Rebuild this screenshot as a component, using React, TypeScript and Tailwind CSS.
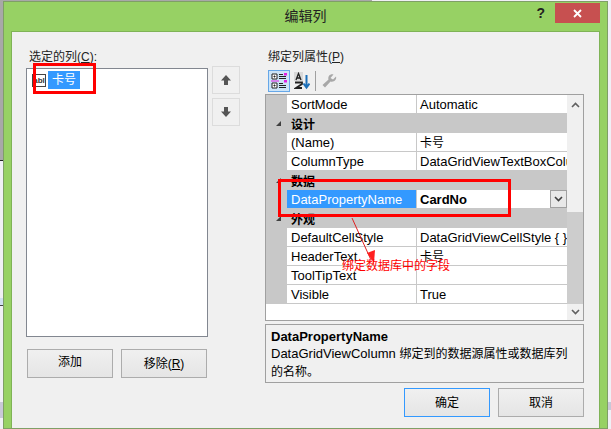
const SANS = "font-['Liberation_Sans','Noto_Sans_CJK_SC',sans-serif]";

const rows = [
  { name: "SortMode", value: "Automatic" },
  { cat: "设计" },
  { name: "(Name)", value: <span className="text-[12px]">卡号</span> },
  { name: "ColumnType", value: "DataGridViewTextBoxColu" },
  { cat: "数据" },
  { name: "DataPropertyName", value: "CardNo", selected: true },
  { cat: "外观" },
  { name: "DefaultCellStyle", value: "DataGridViewCellStyle { }" },
  { name: "HeaderText", value: <span className="text-[12px]">卡号</span> },
  { name: "ToolTipText", value: "" },
  { name: "Visible", value: "True" },
];

function Row({ row }: { row: any }) {
  if (row.cat) {
    return (
      <div className="flex h-[19px] items-center bg-[#c8c8c8] text-[12px]">
        <div className="flex w-[21px] justify-center pl-[3px]">
          <svg width="7" height="7" viewBox="0 0 7 7"><path d="M6 1V6H1Z" fill="#404040" /></svg>
        </div>
        <span className="pl-[4px] pt-[2px] font-bold text-black">{row.cat}</span>
      </div>
    );
  }
  return (
    <div className="flex h-[19px] border-b border-[#c8c8c8] bg-white">
      <div className="w-[21px] shrink-0 bg-[#c8c8c8]" />
      <div className={`flex w-[129px] shrink-0 items-center pl-[4px] pt-[2px] ${row.selected ? "bg-[#3399ff] text-white" : "text-black"}`}>
        {row.name}
      </div>
      <div className={`flex min-w-0 flex-1 items-center overflow-hidden whitespace-nowrap border-l border-[#c8c8c8] pl-[3px] pt-[2px] text-black ${row.selected ? "font-bold" : ""}`}>
        {row.value}
        {row.selected && (
          <div className="ml-auto -mt-[2px] flex h-[18px] w-[17px] items-center justify-center border border-[#a0a0a0] bg-[#e8e8e8]">
            <svg width="9" height="6" viewBox="0 0 9 6"><path d="M1 1L4.5 4.5L8 1" fill="none" stroke="#404040" strokeWidth="1.6" /></svg>
          </div>
        )}
      </div>
    </div>
  );
}

function ArrowBtn({ up }: { up?: boolean }) {
  return (
    <button className="flex h-[28px] w-[28px] items-center justify-center border border-[#dcdcdc]">
      <svg width="12" height="12" viewBox="0 0 12 12">
        <path d={up ? "M6 1L11 6.5H8V11H4V6.5H1Z" : "M6 11L11 5.5H8V1H4V5.5H1Z"} fill="#555" />
      </svg>
    </button>
  );
}

function DlgBtn({ children, primary, raised }: { children: React.ReactNode; primary?: boolean; raised?: boolean }) {
  return (
    <button className={`h-[29px] w-[86px] border bg-gradient-to-b from-[#f0f0f0] to-[#e5e5e5] text-[12px] text-black ${primary ? "border-[#3399ff]" : "border-[#acacac]"} ${raised ? "pb-[4px]" : ""}`}>
      {children}
    </button>
  );
}

export default function App() {
  return (
    <div className={`relative h-[429px] w-[611px] overflow-hidden bg-[#f0f0f5] pl-[3px] pt-px text-[13px] ${SANS}`}>
      {/* bits of the desktop showing behind the dialog */}
      <div className="absolute left-0 top-0 h-[1px] w-[372px] bg-[#a8a8a8]" />
      <div className="absolute left-0 top-0 h-[161px] w-[3px] border-b border-[#222] bg-[#a8a8a8]" />
      <div className="absolute left-0 top-[298px] h-[8px] w-[3px] border-b border-[#444] bg-[#d0e0f0]" />
      <div className="absolute left-0 top-[402px] h-[16px] w-[3px] bg-[#c8c8d8]" />
      <div className="absolute right-0 top-[402px] h-[8px] w-[3px] bg-[#c8c8d8]" />
      <div className="flex h-[428px] w-[605px] flex-col border border-[#7f9f66] bg-[#97d164]">
        {/* title bar */}
        <div className="relative flex h-[29px] shrink-0 items-center justify-center text-[14px] text-[#222]">
          编辑列
          <span className="absolute right-[62px] top-[1px] text-[14px] font-bold">?</span>
          <div className="absolute right-[7px] top-[1px] flex h-[20px] w-[45px] items-center justify-center bg-[#c75050]">
            <svg width="9" height="9" viewBox="0 0 9 9"><path d="M1 1L8 8M8 1L1 8" stroke="#fff" strokeWidth="1.8" /></svg>
          </div>
        </div>

        <div className="ml-[7px] mr-[7px] flex flex-1 gap-[4px] border-l border-r border-t border-[#7fb356] bg-[#f0f0f0] pl-[14px] pt-[16px]">
          {/* left column */}
          <div className="w-[182px] shrink-0">
            <div className="h-[20px] pl-[3px] text-[12px] leading-[18px] text-[#222]">选定的列(<u>C</u>):</div>
            <div className="flex h-[269px] items-start border border-[#828790] bg-white pl-[5px] pt-[2px]">
              <div className="mt-[3px] flex h-[13px] w-[14px] items-center justify-center border border-[#444] text-[8px] font-bold leading-none text-[#333]">
                abl
              </div>
              <div className="ml-[2px] flex h-[18px] w-[32px] items-center justify-center bg-[#3399ff] text-[12px] text-white">卡号</div>
            </div>
            <div className="mt-[12px] flex gap-[8px] pl-px">
              <DlgBtn raised>添加</DlgBtn>
              <DlgBtn>移除(<u>R</u>)</DlgBtn>
            </div>
          </div>

          {/* move buttons */}
          <div className="flex w-[49px] shrink-0 flex-col gap-[4px] pt-[18px]">
            <ArrowBtn up />
            <ArrowBtn />
          </div>

          {/* right column */}
          <div className="w-[319px] shrink-0">
            <div className="h-[20px] pl-[3px] text-[12px] leading-[18px] text-[#222]">绑定列属性(<u>P</u>)</div>
            <div className="flex h-[26px] items-center gap-[4px] pl-[3px]">
              <div className="flex h-[22px] w-[22px] items-center justify-center border border-[#66a7e8] bg-[#cce4f7]">
                <svg width="16" height="16" viewBox="0 0 16 16">
                  <path d="M1 1H6V6H1ZM1 10H6V15H1Z" fill="#fff" stroke="#222" />
                  <path d="M2.5 3.5H4.5M2.5 12.5H4.5M3.5 2.5V4.5M3.5 11.5V13.5" stroke="#222" />
                  <path d="M8 1.5H12M8 3.5H15M8 5.5H15M8 10.5H12M8 12.5H15M8 14.5H15" stroke="#222" />
                  <path d="M0 8H8" stroke="#e020e0" />
                  <path d="M13 0H16V2.5H13ZM13 7H16V9.5H13Z" fill="#e020e0" />
                </svg>
              </div>
              <svg width="16" height="18" viewBox="0 0 16 18">
                <path d="M0 0H9V9H0Z" fill="#d8d8d8" />
                <path d="M2 8L4.5 1.5L7 8M3 6H6" fill="none" stroke="#222" strokeWidth="1.3" />
                <path d="M1 10.5H8V12L2 16H8" fill="none" stroke="#222" strokeWidth="1.8" />
                <path d="M12.5 3V15M9.5 11.5L12.5 15.5L15.5 11.5" fill="none" stroke="#1c6fb8" strokeWidth="2" />
              </svg>
              <div className="mx-[1px] h-[20px] w-px bg-[#a0a0a0]" />
              <svg width="16" height="16" viewBox="0 0 16 16">
                <path d="M15 3.5L12 6.5L9.5 5L12.5 1.5C9.5 0.5 6.5 3 7.5 6.5L1.5 12L4 14.5L9.5 8.5C13 9.5 16 6.5 15 3.5Z" fill="#a8a8a8" />
              </svg>
            </div>
            <div className="flex h-[227px] border border-[#a0a0a0] bg-white">
              <div className="w-[301px] shrink-0">
                {rows.map((r, i) => <Row key={i} row={r} />)}
              </div>
              <div className="flex flex-1 flex-col items-center bg-[#f0f0f0]">
                <svg className="mt-[7px]" width="9" height="6" viewBox="0 0 9 6"><path d="M1 5L4.5 1.5L8 5" fill="none" stroke="#606060" strokeWidth="1.6" /></svg>
                <div className="mt-[104px] h-[92px] w-full bg-[#cdcdcd]" />
                <svg className="mt-[5px]" width="9" height="6" viewBox="0 0 9 6"><path d="M1 1L4.5 4.5L8 1" fill="none" stroke="#606060" strokeWidth="1.6" /></svg>
              </div>
            </div>
            <div className="mt-[3px] h-[59px] border border-[#a0a0a0] px-[5px] pt-[3px] text-black">
              <div className="font-bold leading-[17px]">DataPropertyName</div>
              <div className="leading-[17px]">
                DataGridViewColumn <span className="text-[12px]">绑定到的数据源属性或数据库列</span>
                <br />
                <span className="text-[12px]">的名称。</span>
              </div>
            </div>
            <div className="mt-[5px] flex justify-end gap-[8px]">
              <DlgBtn primary>确定</DlgBtn>
              <DlgBtn>取消</DlgBtn>
            </div>
          </div>
        </div>
      </div>

      {/* annotations drawn over the dialog */}
      <div className="absolute left-[33px] top-[63px] h-[31px] w-[63px] border-[3px] border-[#ff0000]" />
      <div className="absolute left-[278px] top-[179px] h-[38px] w-[233px] border-[3px] border-[#ff0000]" />
      <svg className="absolute left-[340px] top-[210px]" width="50" height="60" viewBox="0 0 50 60">
        <path d="M12 8L31 50" stroke="#e02020" strokeWidth="1" fill="none" />
        <path d="M34 53L27 43L35 40Z" fill="#ff2020" />
      </svg>
      <span className="absolute left-[342px] top-[258px] text-[12px] leading-[16px] text-[#ff0000]">绑定数据库中的字段</span>
    </div>
  );
}
